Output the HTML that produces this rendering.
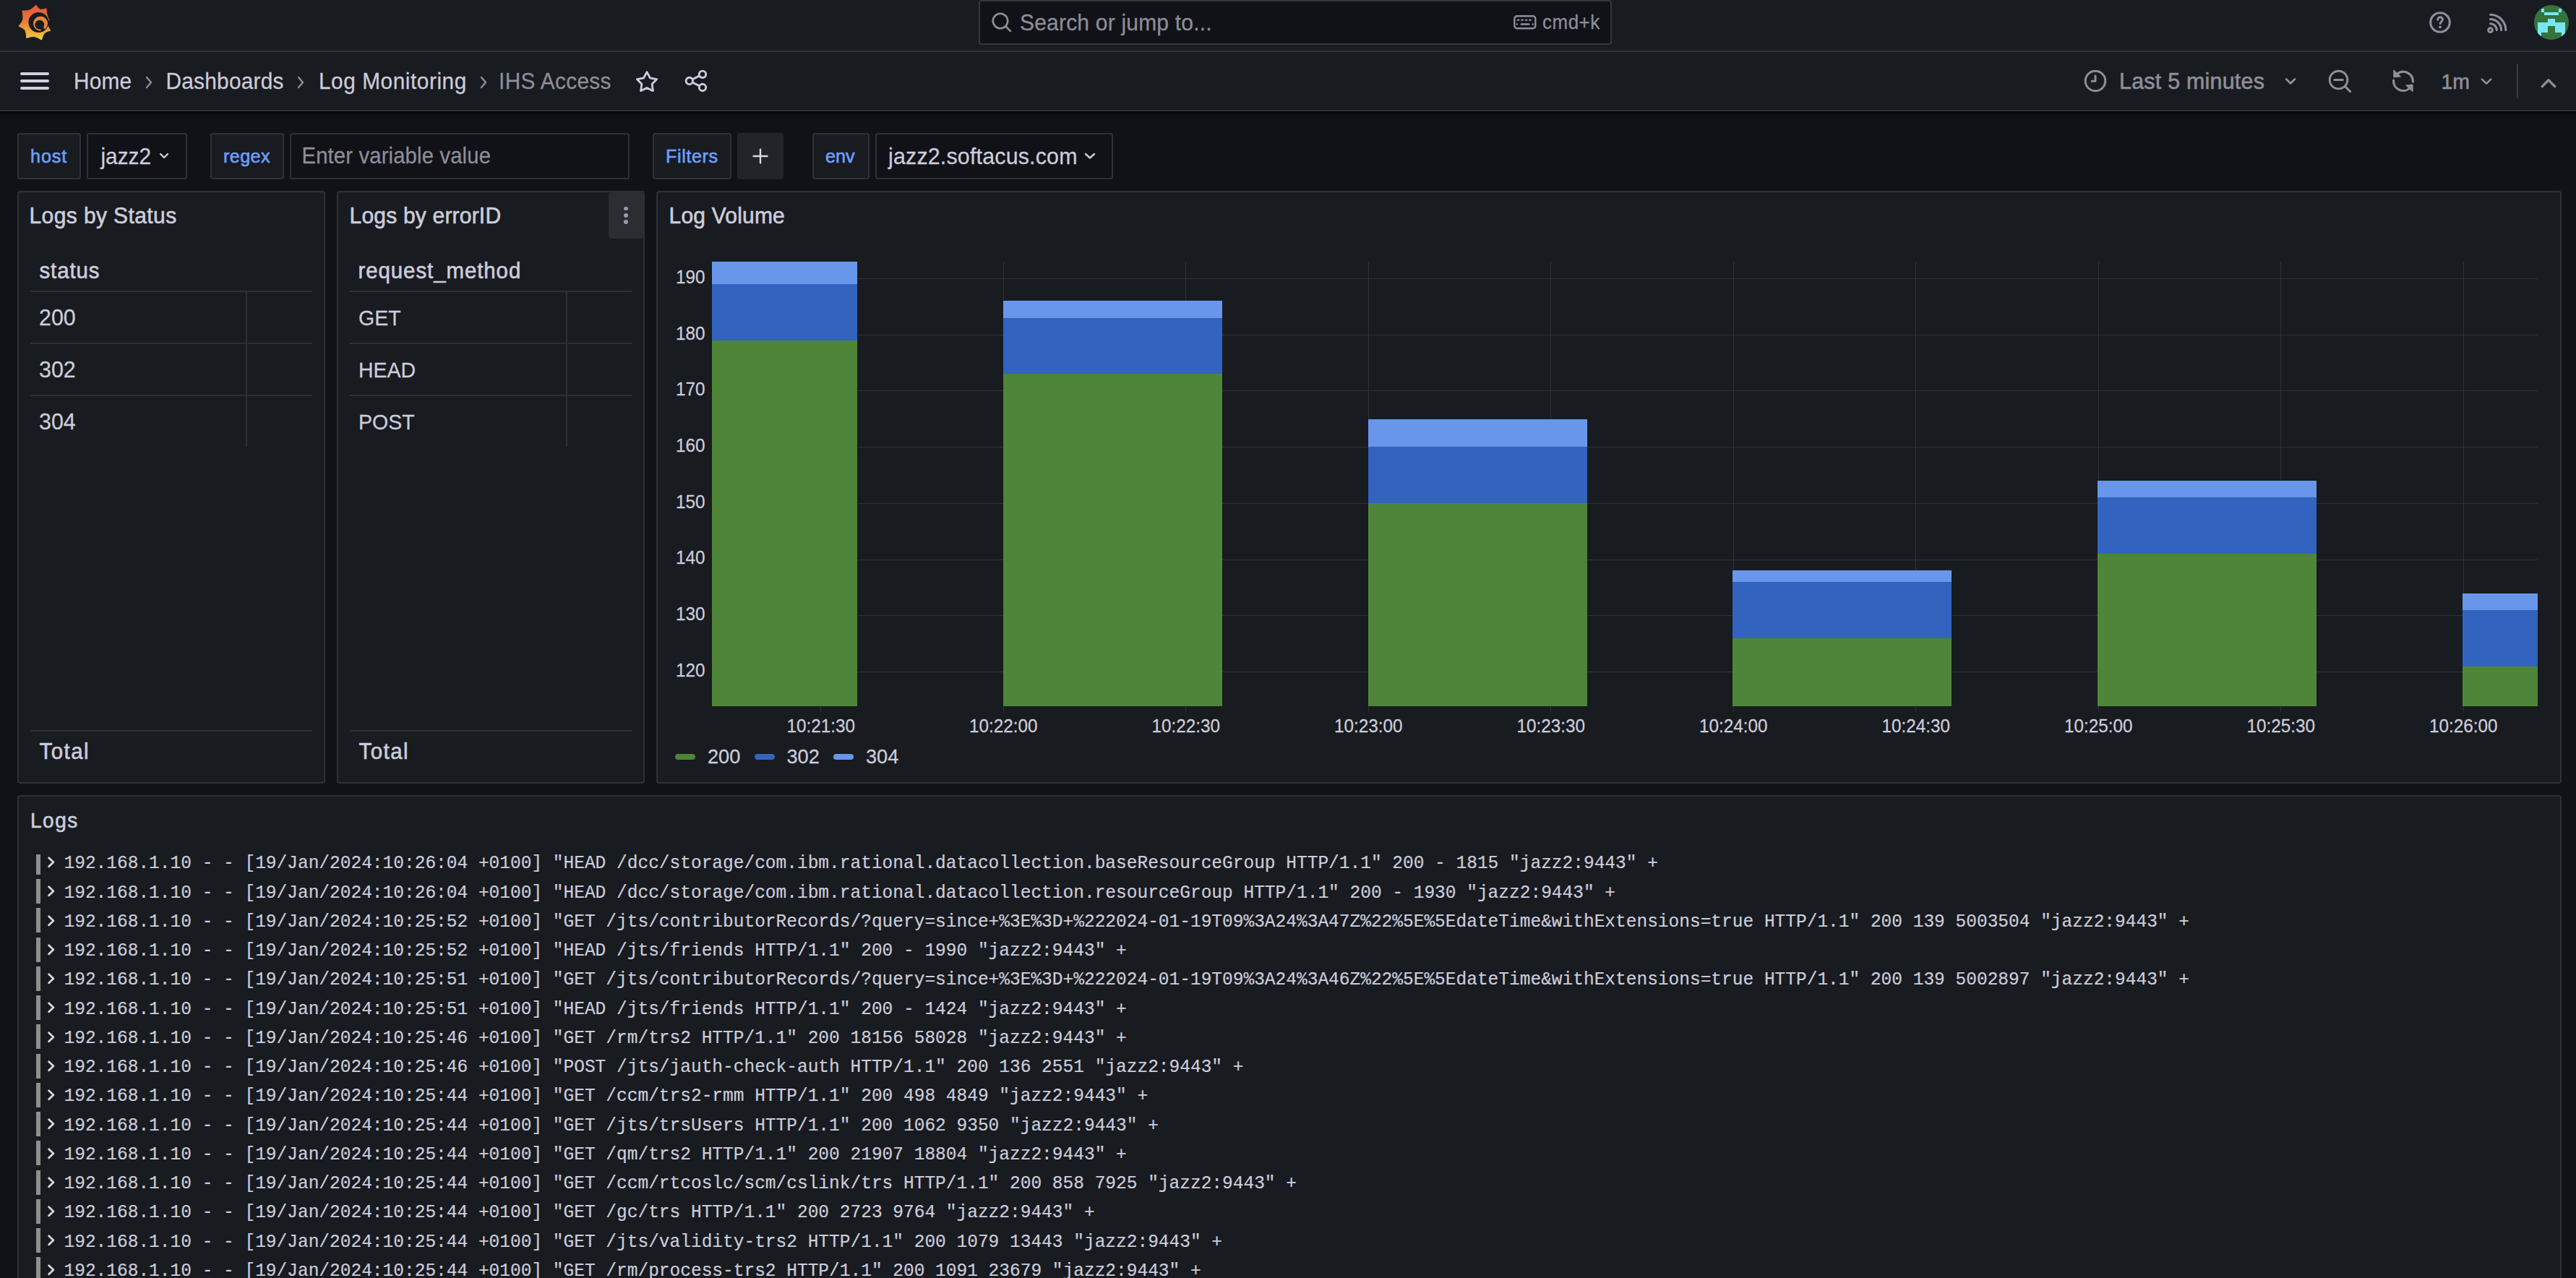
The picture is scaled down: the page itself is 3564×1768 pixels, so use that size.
<!DOCTYPE html>
<html><head><meta charset="utf-8"><title>IHS Access - Grafana</title>
<style>
html,body{margin:0;padding:0;background:#111217;width:3564px;height:1768px;overflow:hidden}
#root{position:relative;width:3564px;height:1768px;overflow:hidden;background:#111217}
.t{position:absolute;white-space:pre;margin:0}
.r{position:absolute}
</style></head><body><div id="root">
<div class="r" style="left:0px;top:0px;width:3564px;height:70px;background:#181b1f"></div>
<div class="r" style="left:0px;top:70px;width:3564px;height:2px;background:#2f3136"></div>
<svg class="r" style="left:20px;top:0px;" width="60" height="60" viewBox="20 0 60 60"><defs><linearGradient id="lg" x1="0" y1="0" x2="0" y2="1"><stop offset="0" stop-color="#e4573a"/><stop offset="0.45" stop-color="#e6793a"/><stop offset="1" stop-color="#f4cf3e"/></linearGradient></defs>
<path fill="url(#lg)" stroke="url(#lg)" stroke-width="0.8" stroke-linejoin="round" d="M49.8 6.8 Q52.4 11.3 55.5 13.1 Q59.2 13.6 64.1 11.7 Q64.0 17.9 65.7 22.5 Q66.7 26.6 70.0 30.0 Q66.9 32.5 66.1 35.0 Q66.8 38.2 69.8 42.3 Q64.7 43.3 61.5 45.8 Q58.9 49.4 57.6 55.2 Q52.2 51.6 47.3 50.6 Q42.4 50.4 36.7 52.6 Q36.5 46.2 34.8 41.7 Q31.5 38.5 25.9 36.2 Q30.1 31.5 31.8 26.8 Q32.4 21.5 30.8 15.0 Q36.9 15.4 41.5 13.7 Q45.8 11.5 49.8 6.8 Z"/>
<circle cx="53.4" cy="31" r="14" fill="#181b1f"/>
<path d="M63 29 L72 27.5 L72 37 L64 35 Z" fill="#181b1f"/>
<circle cx="56" cy="32.6" r="10" fill="#e8843a"/>
<circle cx="54.8" cy="34.2" r="6.4" fill="#181b1f"/>
<path d="M58.6 36.4 L62.6 41.2 L56.9 44.2 L55.9 38.2 Z" fill="#181b1f"/></svg>
<div class="r" style="left:1354px;top:0px;width:876px;height:62px;background:#111217;border:2px solid #36373e;border-radius:4px;box-sizing:border-box"></div>
<svg class="r" style="left:1372px;top:17px;" width="28" height="28" viewBox="0 0 28 28"><circle cx="12" cy="12" r="10.2" fill="none" stroke="#8e8e99" stroke-width="2.6"/><path d="M19.5 19.5 L26 26" stroke="#8e8e99" stroke-width="2.6" stroke-linecap="round"/></svg>
<div class="t " style="left:1411.00px;top:16.50px;font-size:30px;line-height:30px;color:#8e8e99;font-weight:400;font-family:'Liberation Sans', sans-serif;transform:scaleY(1.045);transform-origin:0 25.40px;-webkit-text-stroke:0.25px currentColor;letter-spacing:0.2px">Search or jump to...</div>
<svg class="r" style="left:2094px;top:21px;" width="32" height="20" viewBox="0 0 32 20"><rect x="1.3" y="1.3" width="29" height="17" rx="3.5" fill="none" stroke="#8e8e99" stroke-width="2.4"/><g fill="#8e8e99"><ellipse cx="6.5" cy="6.8" rx="2" ry="1.3"/><ellipse cx="12" cy="6.8" rx="2" ry="1.3"/><ellipse cx="17.5" cy="6.8" rx="2" ry="1.3"/><ellipse cx="23" cy="6.8" rx="2" ry="1.3"/><circle cx="4.8" cy="12.5" r="1.3"/><rect x="9.5" y="11.2" width="13" height="2.6" rx="1.3"/><circle cx="26.8" cy="12.5" r="1.3"/></g></svg>
<div class="t " style="left:2134.00px;top:18.09px;font-size:26px;line-height:26px;color:#8e8e99;font-weight:400;font-family:'Liberation Sans', sans-serif;transform:scaleY(1.045);transform-origin:0 22.01px;-webkit-text-stroke:0.25px currentColor;letter-spacing:0.5px">cmd+k</div>
<svg class="r" style="left:3360px;top:15px;" width="32" height="32" viewBox="0 0 32 32"><circle cx="16" cy="16" r="13.3" fill="none" stroke="#8e8e99" stroke-width="3.1"/><path d="M12.7 12.3 C12.7 10.2 14.3 8.8 16.2 8.8 C18.1 8.8 19.6 10.2 19.6 12 C19.6 14.2 16.3 14.9 16.2 17.6" fill="none" stroke="#8e8e99" stroke-width="3" stroke-linecap="round"/><circle cx="16" cy="22.4" r="1.9" fill="#8e8e99"/></svg>
<svg class="r" style="left:3438px;top:15px;" width="34" height="34" viewBox="0 0 34 34"><circle cx="7.5" cy="26.6" r="2.9" fill="none" stroke="#8e8e99" stroke-width="3"/><g fill="none" stroke="#8e8e99" stroke-width="3.1" stroke-linecap="round"><path d="M7.5 17.8 A8.8 8.8 0 0 1 16.3 26.6"/><path d="M7.5 11.5 A15.1 15.1 0 0 1 22.6 26.6"/><path d="M7.5 5.3 A21.3 21.3 0 0 1 28.8 26.6"/></g></svg>
<svg class="r" style="left:3506px;top:7px;" width="48" height="48" viewBox="0 0 48 48"><clipPath id="avc"><circle cx="24" cy="24" r="24"/></clipPath><g clip-path="url(#avc)" shape-rendering="crispEdges"><rect width="48" height="48" fill="#35733d"/><g fill="#78e6f4"><rect x="9.60" y="4.80" width="4.80" height="4.8"/><rect x="33.60" y="4.80" width="4.80" height="4.8"/><rect x="14.40" y="9.60" width="19.20" height="4.8"/><rect x="19.20" y="19.20" width="9.60" height="4.8"/><rect x="4.80" y="24.00" width="38.40" height="4.8"/><rect x="4.80" y="28.80" width="14.40" height="4.8"/><rect x="28.80" y="28.80" width="14.40" height="4.8"/><rect x="4.80" y="33.60" width="14.40" height="4.8"/><rect x="28.80" y="33.60" width="14.40" height="4.8"/><rect x="4.80" y="38.40" width="4.80" height="4.8"/><rect x="38.40" y="38.40" width="4.80" height="4.8"/></g></g></svg>
<div class="r" style="left:0px;top:72px;width:3564px;height:80px;background:#181b1f"></div>
<div class="r" style="left:0px;top:152px;width:3564px;height:2px;background:#2f3136"></div>
<div class="r" style="left:0px;top:154px;width:3564px;height:12px;background:linear-gradient(rgba(0,0,0,0.75),rgba(0,0,0,0.3) 35%,rgba(0,0,0,0))"></div>
<svg class="r" style="left:27px;top:99px;" width="42" height="26" viewBox="0 0 42 26"><g stroke="#d0d0de" stroke-width="4" stroke-linecap="round"><path d="M3 3 H39"/><path d="M3 13 H39"/><path d="M3 23 H39"/></g></svg>
<div class="t " style="left:102.00px;top:97.77px;font-size:29.8px;line-height:29.8px;color:#ccccdc;font-weight:400;font-family:'Liberation Sans', sans-serif;transform:scaleY(1.045);transform-origin:0 25.23px;-webkit-text-stroke:0.25px currentColor;letter-spacing:0.2px">Home</div>
<svg class="r" style="left:201px;top:105px;" width="10" height="18" viewBox="0 0 10 18"><path d="M2 2 L8 9 L2 16" fill="none" stroke="#8e8e99" stroke-width="2.4" stroke-linecap="round" stroke-linejoin="round"/></svg>
<div class="t " style="left:229.50px;top:97.77px;font-size:29.8px;line-height:29.8px;color:#ccccdc;font-weight:400;font-family:'Liberation Sans', sans-serif;transform:scaleY(1.045);transform-origin:0 25.23px;-webkit-text-stroke:0.25px currentColor;letter-spacing:0.25px">Dashboards</div>
<svg class="r" style="left:411px;top:105px;" width="10" height="18" viewBox="0 0 10 18"><path d="M2 2 L8 9 L2 16" fill="none" stroke="#8e8e99" stroke-width="2.4" stroke-linecap="round" stroke-linejoin="round"/></svg>
<div class="t " style="left:441.00px;top:97.77px;font-size:29.8px;line-height:29.8px;color:#ccccdc;font-weight:400;font-family:'Liberation Sans', sans-serif;transform:scaleY(1.045);transform-origin:0 25.23px;-webkit-text-stroke:0.25px currentColor;letter-spacing:0.55px">Log Monitoring</div>
<svg class="r" style="left:664px;top:105px;" width="10" height="18" viewBox="0 0 10 18"><path d="M2 2 L8 9 L2 16" fill="none" stroke="#8e8e99" stroke-width="2.4" stroke-linecap="round" stroke-linejoin="round"/></svg>
<div class="t " style="left:690.00px;top:97.77px;font-size:29.8px;line-height:29.8px;color:#8e8e99;font-weight:400;font-family:'Liberation Sans', sans-serif;transform:scaleY(1.045);transform-origin:0 25.23px;-webkit-text-stroke:0.25px currentColor;letter-spacing:0.35px">IHS Access</div>
<svg class="r" style="left:875px;top:95.7px;" width="40" height="36" viewBox="0 0 40 36"><path d="M20.00 3.60 L24.40 11.94 L33.70 13.55 L27.12 20.31 L28.46 29.65 L20.00 25.49 L11.54 29.65 L12.88 20.31 L6.30 13.55 L15.60 11.94 Z" fill="none" stroke="#ccccdc" stroke-width="2.8" stroke-linejoin="round"/></svg>
<svg class="r" style="left:940px;top:92px;" width="40" height="40" viewBox="0 0 40 40"><g fill="none" stroke="#ccccdc" stroke-width="2.9"><circle cx="13.8" cy="19.9" r="4.7"/><circle cx="32" cy="10.8" r="4.7"/><circle cx="32" cy="29" r="4.7"/><path d="M18 17.8 L27.8 12.9 M18 22 L27.8 26.9"/></g></svg>
<svg class="r" style="left:2883px;top:96px;" width="32" height="32" viewBox="0 0 32 32"><circle cx="16" cy="16" r="13.8" fill="none" stroke="#8e8e99" stroke-width="3"/><path d="M16 8.8 V16.3 H11.2" fill="none" stroke="#8e8e99" stroke-width="3" stroke-linecap="round" stroke-linejoin="round"/></svg>
<div class="t " style="left:2932.00px;top:97.16px;font-size:30.4px;line-height:30.4px;color:#8e8e99;font-weight:400;font-family:'Liberation Sans', sans-serif;transform:scaleY(1.045);transform-origin:0 25.74px;-webkit-text-stroke:0.25px currentColor;-webkit-text-stroke:0.6px currentColor;letter-spacing:0.25px">Last 5 minutes</div>
<svg class="r" style="left:3160px;top:106.5px;" width="18" height="12" viewBox="0 0 18 12"><path d="M3.1 2.4 L9 8.3 L14.9 2.4" fill="none" stroke="#8e8e99" stroke-width="2.8" stroke-linecap="round" stroke-linejoin="round"/></svg>
<svg class="r" style="left:3221px;top:96px;" width="34" height="34" viewBox="0 0 34 34"><circle cx="14.5" cy="14.5" r="12.3" fill="none" stroke="#8e8e99" stroke-width="3"/><path d="M8.8 14.5 H20.2" stroke="#8e8e99" stroke-width="3" stroke-linecap="round"/><path d="M23.4 23.4 L30.6 30.6" stroke="#8e8e99" stroke-width="3" stroke-linecap="round"/></svg>
<svg class="r" style="left:3300px;top:88px;" width="50" height="50" viewBox="0 0 50 50"><g fill="none" stroke="#8e8e99" stroke-width="3.2" stroke-linecap="round"><path d="M16.2 14.6 A13.4 13.4 0 0 1 38.4 24.9"/><path d="M11.6 23.1 A13.4 13.4 0 0 0 34.5 33.5"/></g><g fill="#8e8e99" stroke="#8e8e99" stroke-width="1.2" stroke-linejoin="round"><path d="M11.9 9.2 L11.9 18.7 L21.2 18.0 Z"/><path d="M38.0 29.2 L38.0 38.6 L28.9 30.1 Z"/></g></svg>
<div class="t " style="left:3377.50px;top:99.47px;font-size:28.5px;line-height:28.5px;color:#8e8e99;font-weight:400;font-family:'Liberation Sans', sans-serif;transform:scaleY(1.045);transform-origin:0 24.13px;-webkit-text-stroke:0.25px currentColor;-webkit-text-stroke:0.6px currentColor;">1m</div>
<svg class="r" style="left:3431px;top:106.5px;" width="18" height="12" viewBox="0 0 18 12"><path d="M2.8 2.6 L9 8.6 L15.2 2.6" fill="none" stroke="#8e8e99" stroke-width="2.7" stroke-linecap="round" stroke-linejoin="round"/></svg>
<div class="r" style="left:3482px;top:88px;width:2px;height:48px;background:#3a3c42"></div>
<svg class="r" style="left:3513px;top:106px;" width="26" height="17" viewBox="0 0 26 17"><path d="M4.2 13.6 L13 4.8 L21.8 13.6" fill="none" stroke="#8e8e99" stroke-width="3.4" stroke-linecap="round" stroke-linejoin="round"/></svg>
<div class="r" style="left:24px;top:184px;width:88px;height:64px;background:#181b1f;border-radius:3px;box-sizing:border-box;border:2px solid #2e3036;"></div>
<div class="t " style="left:42.00px;top:204.26px;font-size:25.2px;line-height:25.2px;color:#6e9fff;font-weight:400;font-family:'Liberation Sans', sans-serif;transform:scaleY(1.045);transform-origin:0 21.34px;-webkit-text-stroke:0.25px currentColor;-webkit-text-stroke:0.6px currentColor;letter-spacing:0.9px">host</div>
<div class="r" style="left:120px;top:184px;width:139px;height:64px;background:#111217;border-radius:3px;box-sizing:border-box;border:2px solid #2e3036;"></div>
<div class="t " style="left:139.50px;top:201.77px;font-size:29.8px;line-height:29.8px;color:#ccccdc;font-weight:400;font-family:'Liberation Sans', sans-serif;transform:scaleY(1.045);transform-origin:0 25.23px;-webkit-text-stroke:0.25px currentColor;">jazz2</div>
<svg class="r" style="left:220px;top:211px;" width="14" height="10" viewBox="0 0 14 10"><path d="M2 2 L7 7 L12 2" fill="none" stroke="#ccccdc" stroke-width="2.4" stroke-linecap="round" stroke-linejoin="round"/></svg>
<div class="r" style="left:291px;top:184px;width:102px;height:64px;background:#181b1f;border-radius:3px;box-sizing:border-box;border:2px solid #2e3036;"></div>
<div class="t " style="left:309.00px;top:204.26px;font-size:25.2px;line-height:25.2px;color:#6e9fff;font-weight:400;font-family:'Liberation Sans', sans-serif;transform:scaleY(1.045);transform-origin:0 21.34px;-webkit-text-stroke:0.25px currentColor;-webkit-text-stroke:0.6px currentColor;letter-spacing:0.4px">regex</div>
<div class="r" style="left:401px;top:184px;width:470px;height:64px;background:#111217;border-radius:3px;box-sizing:border-box;border:2px solid #2e3036;"></div>
<div class="t " style="left:417.50px;top:202.28px;font-size:29.2px;line-height:29.2px;color:#8e8e99;font-weight:400;font-family:'Liberation Sans', sans-serif;transform:scaleY(1.045);transform-origin:0 24.72px;-webkit-text-stroke:0.25px currentColor;letter-spacing:0.18px">Enter variable value</div>
<div class="r" style="left:903px;top:184px;width:109px;height:64px;background:#181b1f;border-radius:3px;box-sizing:border-box;border:2px solid #2e3036;"></div>
<div class="t " style="left:921.00px;top:204.26px;font-size:25.2px;line-height:25.2px;color:#6e9fff;font-weight:400;font-family:'Liberation Sans', sans-serif;transform:scaleY(1.045);transform-origin:0 21.34px;-webkit-text-stroke:0.25px currentColor;-webkit-text-stroke:0.6px currentColor;letter-spacing:0.6px">Filters</div>
<div class="r" style="left:1020px;top:184px;width:64px;height:64px;background:#212429;border-radius:4px"></div>
<svg class="r" style="left:1040px;top:204px;" width="24" height="24" viewBox="0 0 24 24"><path d="M12 2.6 V21.4 M2.6 12 H21.4" stroke="#d8d8e6" stroke-width="2.4" stroke-linecap="round"/></svg>
<div class="r" style="left:1124px;top:184px;width:79px;height:64px;background:#181b1f;border-radius:3px;box-sizing:border-box;border:2px solid #2e3036;"></div>
<div class="t " style="left:1142.00px;top:204.26px;font-size:25.2px;line-height:25.2px;color:#6e9fff;font-weight:400;font-family:'Liberation Sans', sans-serif;transform:scaleY(1.045);transform-origin:0 21.34px;-webkit-text-stroke:0.25px currentColor;-webkit-text-stroke:0.6px currentColor;">env</div>
<div class="r" style="left:1211px;top:184px;width:329px;height:64px;background:#111217;border-radius:3px;box-sizing:border-box;border:2px solid #2e3036;"></div>
<div class="t " style="left:1229.00px;top:201.26px;font-size:30.4px;line-height:30.4px;color:#ccccdc;font-weight:400;font-family:'Liberation Sans', sans-serif;transform:scaleY(1.045);transform-origin:0 25.74px;-webkit-text-stroke:0.25px currentColor;letter-spacing:0.18px">jazz2.softacus.com</div>
<svg class="r" style="left:1500px;top:211px;" width="16" height="10" viewBox="0 0 16 10"><path d="M2 2 L8 7.5 L14 2" fill="none" stroke="#ccccdc" stroke-width="2.4" stroke-linecap="round" stroke-linejoin="round"/></svg>
<div class="r" style="left:24px;top:264px;width:426px;height:820px;background:#181b1f;border:2px solid #2e3036;border-radius:4px;box-sizing:border-box"></div>
<div class="r" style="left:466px;top:264px;width:426px;height:820px;background:#181b1f;border:2px solid #2e3036;border-radius:4px;box-sizing:border-box"></div>
<div class="r" style="left:908px;top:264px;width:2636px;height:820px;background:#181b1f;border:2px solid #2e3036;border-radius:4px;box-sizing:border-box"></div>
<div class="r" style="left:24px;top:1100px;width:3520px;height:700px;background:#181b1f;border:2px solid #2e3036;border-radius:4px;box-sizing:border-box"></div>
<div class="t " style="left:40.50px;top:284.00px;font-size:30px;line-height:30px;color:#ccccdc;font-weight:400;font-family:'Liberation Sans', sans-serif;transform:scaleY(1.045);transform-origin:0 25.40px;-webkit-text-stroke:0.25px currentColor;-webkit-text-stroke:0.6px currentColor;letter-spacing:0.4px">Logs by Status</div>
<div class="t " style="left:54.50px;top:360.11px;font-size:29.4px;line-height:29.4px;color:#ccccdc;font-weight:400;font-family:'Liberation Sans', sans-serif;transform:scaleY(1.045);transform-origin:0 24.89px;-webkit-text-stroke:0.25px currentColor;-webkit-text-stroke:0.6px currentColor;letter-spacing:0.9px">status</div>
<div class="r" style="left:42px;top:402px;width:390px;height:2px;background:#2c2f34"></div>
<div class="t " style="left:54.00px;top:423.86px;font-size:30.4px;line-height:30.4px;color:#ccccdc;font-weight:400;font-family:'Liberation Sans', sans-serif;transform:scaleY(1.045);transform-origin:0 25.74px;-webkit-text-stroke:0.25px currentColor;">200</div>
<div class="r" style="left:42px;top:474px;width:390px;height:2px;background:#2c2f34"></div>
<div class="t " style="left:54.00px;top:495.86px;font-size:30.4px;line-height:30.4px;color:#ccccdc;font-weight:400;font-family:'Liberation Sans', sans-serif;transform:scaleY(1.045);transform-origin:0 25.74px;-webkit-text-stroke:0.25px currentColor;">302</div>
<div class="r" style="left:42px;top:546px;width:390px;height:2px;background:#2c2f34"></div>
<div class="t " style="left:54.00px;top:567.86px;font-size:30.4px;line-height:30.4px;color:#ccccdc;font-weight:400;font-family:'Liberation Sans', sans-serif;transform:scaleY(1.045);transform-origin:0 25.74px;-webkit-text-stroke:0.25px currentColor;">304</div>
<div class="r" style="left:340px;top:404px;width:2px;height:214px;background:#2c2f34"></div>
<div class="r" style="left:42px;top:1010px;width:390px;height:2px;background:#2c2f34"></div>
<div class="t " style="left:54.50px;top:1024.91px;font-size:29.4px;line-height:29.4px;color:#ccccdc;font-weight:400;font-family:'Liberation Sans', sans-serif;transform:scaleY(1.045);transform-origin:0 24.89px;-webkit-text-stroke:0.25px currentColor;-webkit-text-stroke:0.6px currentColor;letter-spacing:1.5px">Total</div>
<div class="t " style="left:483.50px;top:284.10px;font-size:30px;line-height:30px;color:#ccccdc;font-weight:400;font-family:'Liberation Sans', sans-serif;transform:scaleY(1.045);transform-origin:0 25.40px;-webkit-text-stroke:0.25px currentColor;-webkit-text-stroke:0.6px currentColor;letter-spacing:0.2px">Logs by errorID</div>
<div class="r" style="left:842px;top:266px;width:48px;height:64px;background:#2a2d32;border-radius:4px"></div>
<div class="r" style="left:862.8px;top:285.7px;width:5.8px;height:5.8px;border-radius:3px;background:#9a9aa6"></div>
<div class="r" style="left:862.8px;top:295px;width:5.8px;height:5.8px;border-radius:3px;background:#9a9aa6"></div>
<div class="r" style="left:862.8px;top:304.2px;width:5.8px;height:5.8px;border-radius:3px;background:#9a9aa6"></div>
<div class="t " style="left:495.50px;top:360.11px;font-size:29.4px;line-height:29.4px;color:#ccccdc;font-weight:400;font-family:'Liberation Sans', sans-serif;transform:scaleY(1.045);transform-origin:0 24.89px;-webkit-text-stroke:0.25px currentColor;-webkit-text-stroke:0.6px currentColor;letter-spacing:0.95px">request_method</div>
<div class="r" style="left:484px;top:402px;width:390px;height:2px;background:#2c2f34"></div>
<div class="t " style="left:496.00px;top:425.67px;font-size:28.5px;line-height:28.5px;color:#ccccdc;font-weight:400;font-family:'Liberation Sans', sans-serif;transform:scaleY(1.045);transform-origin:0 24.13px;-webkit-text-stroke:0.25px currentColor;">GET</div>
<div class="r" style="left:484px;top:474px;width:390px;height:2px;background:#2c2f34"></div>
<div class="t " style="left:496.00px;top:497.67px;font-size:28.5px;line-height:28.5px;color:#ccccdc;font-weight:400;font-family:'Liberation Sans', sans-serif;transform:scaleY(1.045);transform-origin:0 24.13px;-webkit-text-stroke:0.25px currentColor;">HEAD</div>
<div class="r" style="left:484px;top:546px;width:390px;height:2px;background:#2c2f34"></div>
<div class="t " style="left:496.00px;top:569.67px;font-size:28.5px;line-height:28.5px;color:#ccccdc;font-weight:400;font-family:'Liberation Sans', sans-serif;transform:scaleY(1.045);transform-origin:0 24.13px;-webkit-text-stroke:0.25px currentColor;">POST</div>
<div class="r" style="left:783px;top:404px;width:2px;height:214px;background:#2c2f34"></div>
<div class="r" style="left:484px;top:1010px;width:390px;height:2px;background:#2c2f34"></div>
<div class="t " style="left:496.50px;top:1024.91px;font-size:29.4px;line-height:29.4px;color:#ccccdc;font-weight:400;font-family:'Liberation Sans', sans-serif;transform:scaleY(1.045);transform-origin:0 24.89px;-webkit-text-stroke:0.25px currentColor;-webkit-text-stroke:0.6px currentColor;letter-spacing:1.5px">Total</div>
<div class="t " style="left:925.50px;top:283.90px;font-size:30px;line-height:30px;color:#ccccdc;font-weight:400;font-family:'Liberation Sans', sans-serif;transform:scaleY(1.045);transform-origin:0 25.40px;-webkit-text-stroke:0.25px currentColor;-webkit-text-stroke:0.6px currentColor;letter-spacing:0.2px">Log Volume</div>
<div class="r" style="left:985px;top:929px;width:2526px;height:1px;background:#2e3135"></div>
<div class="t " style="left:935.00px;top:915.90px;font-size:24.3px;line-height:24.3px;color:#ccccdc;font-weight:400;font-family:'Liberation Sans', sans-serif;transform:scaleY(1.045);transform-origin:0 20.57px;-webkit-text-stroke:0.25px currentColor;">120</div>
<div class="r" style="left:985px;top:851px;width:2526px;height:1px;background:#2e3135"></div>
<div class="t " style="left:935.00px;top:838.19px;font-size:24.3px;line-height:24.3px;color:#ccccdc;font-weight:400;font-family:'Liberation Sans', sans-serif;transform:scaleY(1.045);transform-origin:0 20.57px;-webkit-text-stroke:0.25px currentColor;">130</div>
<div class="r" style="left:985px;top:774px;width:2526px;height:1px;background:#2e3135"></div>
<div class="t " style="left:935.00px;top:760.48px;font-size:24.3px;line-height:24.3px;color:#ccccdc;font-weight:400;font-family:'Liberation Sans', sans-serif;transform:scaleY(1.045);transform-origin:0 20.57px;-webkit-text-stroke:0.25px currentColor;">140</div>
<div class="r" style="left:985px;top:696px;width:2526px;height:1px;background:#2e3135"></div>
<div class="t " style="left:935.00px;top:682.77px;font-size:24.3px;line-height:24.3px;color:#ccccdc;font-weight:400;font-family:'Liberation Sans', sans-serif;transform:scaleY(1.045);transform-origin:0 20.57px;-webkit-text-stroke:0.25px currentColor;">150</div>
<div class="r" style="left:985px;top:618px;width:2526px;height:1px;background:#2e3135"></div>
<div class="t " style="left:935.00px;top:605.06px;font-size:24.3px;line-height:24.3px;color:#ccccdc;font-weight:400;font-family:'Liberation Sans', sans-serif;transform:scaleY(1.045);transform-origin:0 20.57px;-webkit-text-stroke:0.25px currentColor;">160</div>
<div class="r" style="left:985px;top:540px;width:2526px;height:1px;background:#2e3135"></div>
<div class="t " style="left:935.00px;top:527.35px;font-size:24.3px;line-height:24.3px;color:#ccccdc;font-weight:400;font-family:'Liberation Sans', sans-serif;transform:scaleY(1.045);transform-origin:0 20.57px;-webkit-text-stroke:0.25px currentColor;">170</div>
<div class="r" style="left:985px;top:463px;width:2526px;height:1px;background:#2e3135"></div>
<div class="t " style="left:935.00px;top:449.64px;font-size:24.3px;line-height:24.3px;color:#ccccdc;font-weight:400;font-family:'Liberation Sans', sans-serif;transform:scaleY(1.045);transform-origin:0 20.57px;-webkit-text-stroke:0.25px currentColor;">180</div>
<div class="r" style="left:985px;top:385px;width:2526px;height:1px;background:#2e3135"></div>
<div class="t " style="left:935.00px;top:371.93px;font-size:24.3px;line-height:24.3px;color:#ccccdc;font-weight:400;font-family:'Liberation Sans', sans-serif;transform:scaleY(1.045);transform-origin:0 20.57px;-webkit-text-stroke:0.25px currentColor;">190</div>
<div class="r" style="left:1135px;top:362px;width:1px;height:623px;background:#2e3135"></div>
<div class="t" style="left:1075.80px;top:993.43px;width:120px;text-align:center;font-size:24.3px;line-height:24.3px;color:#ccccdc;font-family:'Liberation Sans', sans-serif;transform:scaleY(1.045);transform-origin:0 20.57px;-webkit-text-stroke:0.25px currentColor">10:21:30</div>
<div class="r" style="left:1388px;top:362px;width:1px;height:623px;background:#2e3135"></div>
<div class="t" style="left:1328.30px;top:993.43px;width:120px;text-align:center;font-size:24.3px;line-height:24.3px;color:#ccccdc;font-family:'Liberation Sans', sans-serif;transform:scaleY(1.045);transform-origin:0 20.57px;-webkit-text-stroke:0.25px currentColor">10:22:00</div>
<div class="r" style="left:1640px;top:362px;width:1px;height:623px;background:#2e3135"></div>
<div class="t" style="left:1580.80px;top:993.43px;width:120px;text-align:center;font-size:24.3px;line-height:24.3px;color:#ccccdc;font-family:'Liberation Sans', sans-serif;transform:scaleY(1.045);transform-origin:0 20.57px;-webkit-text-stroke:0.25px currentColor">10:22:30</div>
<div class="r" style="left:1893px;top:362px;width:1px;height:623px;background:#2e3135"></div>
<div class="t" style="left:1833.30px;top:993.43px;width:120px;text-align:center;font-size:24.3px;line-height:24.3px;color:#ccccdc;font-family:'Liberation Sans', sans-serif;transform:scaleY(1.045);transform-origin:0 20.57px;-webkit-text-stroke:0.25px currentColor">10:23:00</div>
<div class="r" style="left:2145px;top:362px;width:1px;height:623px;background:#2e3135"></div>
<div class="t" style="left:2085.80px;top:993.43px;width:120px;text-align:center;font-size:24.3px;line-height:24.3px;color:#ccccdc;font-family:'Liberation Sans', sans-serif;transform:scaleY(1.045);transform-origin:0 20.57px;-webkit-text-stroke:0.25px currentColor">10:23:30</div>
<div class="r" style="left:2398px;top:362px;width:1px;height:623px;background:#2e3135"></div>
<div class="t" style="left:2338.30px;top:993.43px;width:120px;text-align:center;font-size:24.3px;line-height:24.3px;color:#ccccdc;font-family:'Liberation Sans', sans-serif;transform:scaleY(1.045);transform-origin:0 20.57px;-webkit-text-stroke:0.25px currentColor">10:24:00</div>
<div class="r" style="left:2650px;top:362px;width:1px;height:623px;background:#2e3135"></div>
<div class="t" style="left:2590.80px;top:993.43px;width:120px;text-align:center;font-size:24.3px;line-height:24.3px;color:#ccccdc;font-family:'Liberation Sans', sans-serif;transform:scaleY(1.045);transform-origin:0 20.57px;-webkit-text-stroke:0.25px currentColor">10:24:30</div>
<div class="r" style="left:2903px;top:362px;width:1px;height:623px;background:#2e3135"></div>
<div class="t" style="left:2843.30px;top:993.43px;width:120px;text-align:center;font-size:24.3px;line-height:24.3px;color:#ccccdc;font-family:'Liberation Sans', sans-serif;transform:scaleY(1.045);transform-origin:0 20.57px;-webkit-text-stroke:0.25px currentColor">10:25:00</div>
<div class="r" style="left:3155px;top:362px;width:1px;height:623px;background:#2e3135"></div>
<div class="t" style="left:3095.80px;top:993.43px;width:120px;text-align:center;font-size:24.3px;line-height:24.3px;color:#ccccdc;font-family:'Liberation Sans', sans-serif;transform:scaleY(1.045);transform-origin:0 20.57px;-webkit-text-stroke:0.25px currentColor">10:25:30</div>
<div class="r" style="left:3408px;top:362px;width:1px;height:623px;background:#2e3135"></div>
<div class="t" style="left:3348.30px;top:993.43px;width:120px;text-align:center;font-size:24.3px;line-height:24.3px;color:#ccccdc;font-family:'Liberation Sans', sans-serif;transform:scaleY(1.045);transform-origin:0 20.57px;-webkit-text-stroke:0.25px currentColor">10:26:00</div>
<div class="r" style="left:985px;top:362px;width:201px;height:31px;background:#6896ea"></div>
<div class="r" style="left:985px;top:393px;width:201px;height:78px;background:#3263bf"></div>
<div class="r" style="left:985px;top:471px;width:201px;height:506px;background:#4f8539"></div>
<div class="r" style="left:1388px;top:416px;width:303px;height:24px;background:#6896ea"></div>
<div class="r" style="left:1388px;top:440px;width:303px;height:77px;background:#3263bf"></div>
<div class="r" style="left:1388px;top:517px;width:303px;height:460px;background:#4f8539"></div>
<div class="r" style="left:1893px;top:580px;width:303px;height:38px;background:#6896ea"></div>
<div class="r" style="left:1893px;top:618px;width:303px;height:78px;background:#3263bf"></div>
<div class="r" style="left:1893px;top:696px;width:303px;height:281px;background:#4f8539"></div>
<div class="r" style="left:2397px;top:789px;width:303px;height:16px;background:#6896ea"></div>
<div class="r" style="left:2397px;top:805px;width:303px;height:78px;background:#3263bf"></div>
<div class="r" style="left:2397px;top:883px;width:303px;height:94px;background:#4f8539"></div>
<div class="r" style="left:2902px;top:665px;width:303px;height:23px;background:#6896ea"></div>
<div class="r" style="left:2902px;top:688px;width:303px;height:78px;background:#3263bf"></div>
<div class="r" style="left:2902px;top:766px;width:303px;height:211px;background:#4f8539"></div>
<div class="r" style="left:3407px;top:821px;width:104px;height:23px;background:#6896ea"></div>
<div class="r" style="left:3407px;top:844px;width:104px;height:78px;background:#3263bf"></div>
<div class="r" style="left:3407px;top:922px;width:104px;height:55px;background:#4f8539"></div>
<div class="r" style="left:934px;top:1043px;width:28px;height:8px;background:#4f8539;border-radius:4px"></div>
<div class="t " style="left:979.00px;top:1032.67px;font-size:27.2px;line-height:27.2px;color:#ccccdc;font-weight:400;font-family:'Liberation Sans', sans-serif;transform:scaleY(1.045);transform-origin:0 23.03px;-webkit-text-stroke:0.25px currentColor;">200</div>
<div class="r" style="left:1044px;top:1043px;width:28px;height:8px;background:#3263bf;border-radius:4px"></div>
<div class="t " style="left:1088.50px;top:1032.67px;font-size:27.2px;line-height:27.2px;color:#ccccdc;font-weight:400;font-family:'Liberation Sans', sans-serif;transform:scaleY(1.045);transform-origin:0 23.03px;-webkit-text-stroke:0.25px currentColor;">302</div>
<div class="r" style="left:1153px;top:1043px;width:28px;height:8px;background:#6896ea;border-radius:4px"></div>
<div class="t " style="left:1198.00px;top:1032.67px;font-size:27.2px;line-height:27.2px;color:#ccccdc;font-weight:400;font-family:'Liberation Sans', sans-serif;transform:scaleY(1.045);transform-origin:0 23.03px;-webkit-text-stroke:0.25px currentColor;">304</div>
<div class="t " style="left:42.00px;top:1121.69px;font-size:28px;line-height:28px;color:#ccccdc;font-weight:400;font-family:'Liberation Sans', sans-serif;transform:scaleY(1.045);transform-origin:0 23.71px;-webkit-text-stroke:0.25px currentColor;-webkit-text-stroke:0.6px currentColor;letter-spacing:1.5px">Logs</div>
<div class="r" style="left:26px;top:1182px;width:3516px;height:586px;overflow:hidden">
<div class="r" style="left:24px;top:-6.25px;width:6px;height:34px;background:#8e8e8e"></div>
<svg class="r" style="left:38.8px;top:3.20px" width="12" height="16" viewBox="0 0 12 16"><path d="M2.6 1.8 L8.9 7.8 L2.6 13.8" fill="none" stroke="#d8d8e6" stroke-width="2.7" stroke-linecap="round" stroke-linejoin="round"/></svg>
<div class="t" style="left:62.5px;top:1.42px;font-size:24.5px;line-height:24.5px;color:#ccccdc;font-family:'Liberation Mono', monospace;transform:scaleY(1.05);transform-origin:0 18.78px;-webkit-text-stroke:0.2px currentColor">192.168.1.10 - - [19/Jan/2024:10:26:04 +0100] "HEAD /dcc/storage/com.ibm.rational.datacollection.baseResourceGroup HTTP/1.1" 200 - 1815 "jazz2:9443" +</div>
<div class="r" style="left:24px;top:34.00px;width:6px;height:34px;background:#8e8e8e"></div>
<svg class="r" style="left:38.8px;top:43.45px" width="12" height="16" viewBox="0 0 12 16"><path d="M2.6 1.8 L8.9 7.8 L2.6 13.8" fill="none" stroke="#d8d8e6" stroke-width="2.7" stroke-linecap="round" stroke-linejoin="round"/></svg>
<div class="t" style="left:62.5px;top:41.67px;font-size:24.5px;line-height:24.5px;color:#ccccdc;font-family:'Liberation Mono', monospace;transform:scaleY(1.05);transform-origin:0 18.78px;-webkit-text-stroke:0.2px currentColor">192.168.1.10 - - [19/Jan/2024:10:26:04 +0100] "HEAD /dcc/storage/com.ibm.rational.datacollection.resourceGroup HTTP/1.1" 200 - 1930 "jazz2:9443" +</div>
<div class="r" style="left:24px;top:74.25px;width:6px;height:34px;background:#8e8e8e"></div>
<svg class="r" style="left:38.8px;top:83.70px" width="12" height="16" viewBox="0 0 12 16"><path d="M2.6 1.8 L8.9 7.8 L2.6 13.8" fill="none" stroke="#d8d8e6" stroke-width="2.7" stroke-linecap="round" stroke-linejoin="round"/></svg>
<div class="t" style="left:62.5px;top:81.92px;font-size:24.5px;line-height:24.5px;color:#ccccdc;font-family:'Liberation Mono', monospace;transform:scaleY(1.05);transform-origin:0 18.78px;-webkit-text-stroke:0.2px currentColor">192.168.1.10 - - [19/Jan/2024:10:25:52 +0100] "GET /jts/contributorRecords/?query=since+%3E%3D+%222024-01-19T09%3A24%3A47Z%22%5E%5EdateTime&amp;withExtensions=true HTTP/1.1" 200 139 5003504 "jazz2:9443" +</div>
<div class="r" style="left:24px;top:114.50px;width:6px;height:34px;background:#8e8e8e"></div>
<svg class="r" style="left:38.8px;top:123.95px" width="12" height="16" viewBox="0 0 12 16"><path d="M2.6 1.8 L8.9 7.8 L2.6 13.8" fill="none" stroke="#d8d8e6" stroke-width="2.7" stroke-linecap="round" stroke-linejoin="round"/></svg>
<div class="t" style="left:62.5px;top:122.17px;font-size:24.5px;line-height:24.5px;color:#ccccdc;font-family:'Liberation Mono', monospace;transform:scaleY(1.05);transform-origin:0 18.78px;-webkit-text-stroke:0.2px currentColor">192.168.1.10 - - [19/Jan/2024:10:25:52 +0100] "HEAD /jts/friends HTTP/1.1" 200 - 1990 "jazz2:9443" +</div>
<div class="r" style="left:24px;top:154.75px;width:6px;height:34px;background:#8e8e8e"></div>
<svg class="r" style="left:38.8px;top:164.20px" width="12" height="16" viewBox="0 0 12 16"><path d="M2.6 1.8 L8.9 7.8 L2.6 13.8" fill="none" stroke="#d8d8e6" stroke-width="2.7" stroke-linecap="round" stroke-linejoin="round"/></svg>
<div class="t" style="left:62.5px;top:162.42px;font-size:24.5px;line-height:24.5px;color:#ccccdc;font-family:'Liberation Mono', monospace;transform:scaleY(1.05);transform-origin:0 18.78px;-webkit-text-stroke:0.2px currentColor">192.168.1.10 - - [19/Jan/2024:10:25:51 +0100] "GET /jts/contributorRecords/?query=since+%3E%3D+%222024-01-19T09%3A24%3A46Z%22%5E%5EdateTime&amp;withExtensions=true HTTP/1.1" 200 139 5002897 "jazz2:9443" +</div>
<div class="r" style="left:24px;top:195.00px;width:6px;height:34px;background:#8e8e8e"></div>
<svg class="r" style="left:38.8px;top:204.45px" width="12" height="16" viewBox="0 0 12 16"><path d="M2.6 1.8 L8.9 7.8 L2.6 13.8" fill="none" stroke="#d8d8e6" stroke-width="2.7" stroke-linecap="round" stroke-linejoin="round"/></svg>
<div class="t" style="left:62.5px;top:202.67px;font-size:24.5px;line-height:24.5px;color:#ccccdc;font-family:'Liberation Mono', monospace;transform:scaleY(1.05);transform-origin:0 18.78px;-webkit-text-stroke:0.2px currentColor">192.168.1.10 - - [19/Jan/2024:10:25:51 +0100] "HEAD /jts/friends HTTP/1.1" 200 - 1424 "jazz2:9443" +</div>
<div class="r" style="left:24px;top:235.25px;width:6px;height:34px;background:#8e8e8e"></div>
<svg class="r" style="left:38.8px;top:244.70px" width="12" height="16" viewBox="0 0 12 16"><path d="M2.6 1.8 L8.9 7.8 L2.6 13.8" fill="none" stroke="#d8d8e6" stroke-width="2.7" stroke-linecap="round" stroke-linejoin="round"/></svg>
<div class="t" style="left:62.5px;top:242.92px;font-size:24.5px;line-height:24.5px;color:#ccccdc;font-family:'Liberation Mono', monospace;transform:scaleY(1.05);transform-origin:0 18.78px;-webkit-text-stroke:0.2px currentColor">192.168.1.10 - - [19/Jan/2024:10:25:46 +0100] "GET /rm/trs2 HTTP/1.1" 200 18156 58028 "jazz2:9443" +</div>
<div class="r" style="left:24px;top:275.50px;width:6px;height:34px;background:#8e8e8e"></div>
<svg class="r" style="left:38.8px;top:284.95px" width="12" height="16" viewBox="0 0 12 16"><path d="M2.6 1.8 L8.9 7.8 L2.6 13.8" fill="none" stroke="#d8d8e6" stroke-width="2.7" stroke-linecap="round" stroke-linejoin="round"/></svg>
<div class="t" style="left:62.5px;top:283.17px;font-size:24.5px;line-height:24.5px;color:#ccccdc;font-family:'Liberation Mono', monospace;transform:scaleY(1.05);transform-origin:0 18.78px;-webkit-text-stroke:0.2px currentColor">192.168.1.10 - - [19/Jan/2024:10:25:46 +0100] "POST /jts/jauth-check-auth HTTP/1.1" 200 136 2551 "jazz2:9443" +</div>
<div class="r" style="left:24px;top:315.75px;width:6px;height:34px;background:#8e8e8e"></div>
<svg class="r" style="left:38.8px;top:325.20px" width="12" height="16" viewBox="0 0 12 16"><path d="M2.6 1.8 L8.9 7.8 L2.6 13.8" fill="none" stroke="#d8d8e6" stroke-width="2.7" stroke-linecap="round" stroke-linejoin="round"/></svg>
<div class="t" style="left:62.5px;top:323.42px;font-size:24.5px;line-height:24.5px;color:#ccccdc;font-family:'Liberation Mono', monospace;transform:scaleY(1.05);transform-origin:0 18.78px;-webkit-text-stroke:0.2px currentColor">192.168.1.10 - - [19/Jan/2024:10:25:44 +0100] "GET /ccm/trs2-rmm HTTP/1.1" 200 498 4849 "jazz2:9443" +</div>
<div class="r" style="left:24px;top:356.00px;width:6px;height:34px;background:#8e8e8e"></div>
<svg class="r" style="left:38.8px;top:365.45px" width="12" height="16" viewBox="0 0 12 16"><path d="M2.6 1.8 L8.9 7.8 L2.6 13.8" fill="none" stroke="#d8d8e6" stroke-width="2.7" stroke-linecap="round" stroke-linejoin="round"/></svg>
<div class="t" style="left:62.5px;top:363.67px;font-size:24.5px;line-height:24.5px;color:#ccccdc;font-family:'Liberation Mono', monospace;transform:scaleY(1.05);transform-origin:0 18.78px;-webkit-text-stroke:0.2px currentColor">192.168.1.10 - - [19/Jan/2024:10:25:44 +0100] "GET /jts/trsUsers HTTP/1.1" 200 1062 9350 "jazz2:9443" +</div>
<div class="r" style="left:24px;top:396.25px;width:6px;height:34px;background:#8e8e8e"></div>
<svg class="r" style="left:38.8px;top:405.70px" width="12" height="16" viewBox="0 0 12 16"><path d="M2.6 1.8 L8.9 7.8 L2.6 13.8" fill="none" stroke="#d8d8e6" stroke-width="2.7" stroke-linecap="round" stroke-linejoin="round"/></svg>
<div class="t" style="left:62.5px;top:403.92px;font-size:24.5px;line-height:24.5px;color:#ccccdc;font-family:'Liberation Mono', monospace;transform:scaleY(1.05);transform-origin:0 18.78px;-webkit-text-stroke:0.2px currentColor">192.168.1.10 - - [19/Jan/2024:10:25:44 +0100] "GET /qm/trs2 HTTP/1.1" 200 21907 18804 "jazz2:9443" +</div>
<div class="r" style="left:24px;top:436.50px;width:6px;height:34px;background:#8e8e8e"></div>
<svg class="r" style="left:38.8px;top:445.95px" width="12" height="16" viewBox="0 0 12 16"><path d="M2.6 1.8 L8.9 7.8 L2.6 13.8" fill="none" stroke="#d8d8e6" stroke-width="2.7" stroke-linecap="round" stroke-linejoin="round"/></svg>
<div class="t" style="left:62.5px;top:444.17px;font-size:24.5px;line-height:24.5px;color:#ccccdc;font-family:'Liberation Mono', monospace;transform:scaleY(1.05);transform-origin:0 18.78px;-webkit-text-stroke:0.2px currentColor">192.168.1.10 - - [19/Jan/2024:10:25:44 +0100] "GET /ccm/rtcoslc/scm/cslink/trs HTTP/1.1" 200 858 7925 "jazz2:9443" +</div>
<div class="r" style="left:24px;top:476.75px;width:6px;height:34px;background:#8e8e8e"></div>
<svg class="r" style="left:38.8px;top:486.20px" width="12" height="16" viewBox="0 0 12 16"><path d="M2.6 1.8 L8.9 7.8 L2.6 13.8" fill="none" stroke="#d8d8e6" stroke-width="2.7" stroke-linecap="round" stroke-linejoin="round"/></svg>
<div class="t" style="left:62.5px;top:484.42px;font-size:24.5px;line-height:24.5px;color:#ccccdc;font-family:'Liberation Mono', monospace;transform:scaleY(1.05);transform-origin:0 18.78px;-webkit-text-stroke:0.2px currentColor">192.168.1.10 - - [19/Jan/2024:10:25:44 +0100] "GET /gc/trs HTTP/1.1" 200 2723 9764 "jazz2:9443" +</div>
<div class="r" style="left:24px;top:517.00px;width:6px;height:34px;background:#8e8e8e"></div>
<svg class="r" style="left:38.8px;top:526.45px" width="12" height="16" viewBox="0 0 12 16"><path d="M2.6 1.8 L8.9 7.8 L2.6 13.8" fill="none" stroke="#d8d8e6" stroke-width="2.7" stroke-linecap="round" stroke-linejoin="round"/></svg>
<div class="t" style="left:62.5px;top:524.67px;font-size:24.5px;line-height:24.5px;color:#ccccdc;font-family:'Liberation Mono', monospace;transform:scaleY(1.05);transform-origin:0 18.78px;-webkit-text-stroke:0.2px currentColor">192.168.1.10 - - [19/Jan/2024:10:25:44 +0100] "GET /jts/validity-trs2 HTTP/1.1" 200 1079 13443 "jazz2:9443" +</div>
<div class="r" style="left:24px;top:557.25px;width:6px;height:34px;background:#8e8e8e"></div>
<svg class="r" style="left:38.8px;top:566.70px" width="12" height="16" viewBox="0 0 12 16"><path d="M2.6 1.8 L8.9 7.8 L2.6 13.8" fill="none" stroke="#d8d8e6" stroke-width="2.7" stroke-linecap="round" stroke-linejoin="round"/></svg>
<div class="t" style="left:62.5px;top:564.92px;font-size:24.5px;line-height:24.5px;color:#ccccdc;font-family:'Liberation Mono', monospace;transform:scaleY(1.05);transform-origin:0 18.78px;-webkit-text-stroke:0.2px currentColor">192.168.1.10 - - [19/Jan/2024:10:25:44 +0100] "GET /rm/process-trs2 HTTP/1.1" 200 1091 23679 "jazz2:9443" +</div>
</div>
</div></body></html>
